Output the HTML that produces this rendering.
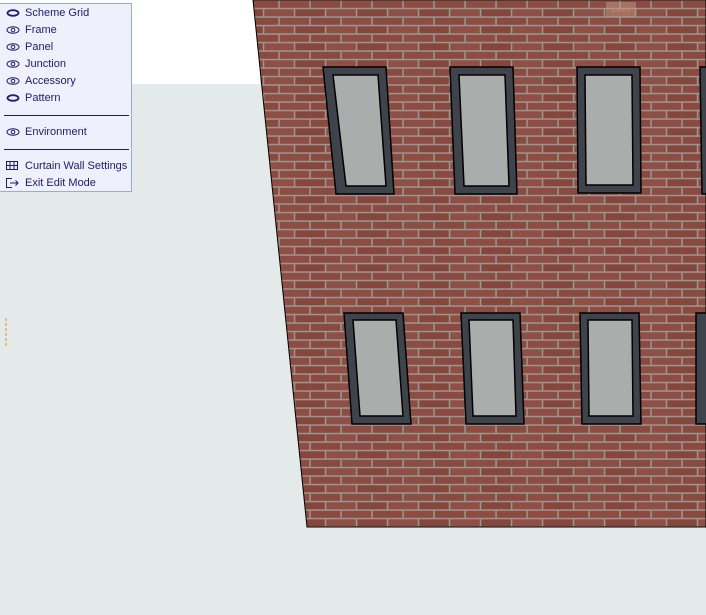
<html><head><style>
body{margin:0;width:706px;height:615px;overflow:hidden;background:#e4e9ea;position:relative;font-family:"Liberation Sans",sans-serif}
#menu{position:absolute;left:0;top:3px;width:131px;height:187px;background:#eff0fc;border:1px solid #8fabf2;border-left:none}
.it{position:absolute;left:25px;font-size:11px;color:#1c1c70;line-height:13px}
.ic{position:absolute;left:6px}
.sep{position:absolute;left:4px;width:125px;height:1px;background:#1c1c70}
</style></head><body>
<div style="position:absolute;left:0;top:0;width:260px;height:84px;background:#fff"></div>
<svg width="706" height="615" style="position:absolute;left:0;top:0">
<defs>
<pattern id="b" width="62" height="17" patternUnits="userSpaceOnUse">
<rect width="62" height="17" fill="#9b9693"/>
<rect x="0.8" y="0.8" width="29.5" height="7" fill="#8a4a40"/>
<rect x="31.8" y="0.8" width="29.5" height="7" fill="#8e4d42"/>
<rect x="-14.7" y="9.3" width="29.5" height="7" fill="#86463c"/>
<rect x="16.3" y="9.3" width="29.5" height="7" fill="#904f44"/>
<rect x="47.3" y="9.3" width="29.5" height="7" fill="#86463c"/>
</pattern>
</defs>
<polygon points="253,0 706,0 706,527 307,527" fill="url(#b)" stroke="#000" stroke-width="1"/>
<g stroke="#000" stroke-width="1.5">
<polygon points="323,67 386,67 394,194 336,194" fill="#3f434b"/>
<polygon points="333,75 378,75 386,186 346,186" fill="#abadad"/>
<polygon points="450,67 513,67 517,194 455,194" fill="#3f434b"/>
<polygon points="459,75 505,75 509,186 464,186" fill="#abadad"/>
<polygon points="577,67 640,67 641,193 578,193" fill="#3f434b"/>
<polygon points="585,75 632,75 633,185 586,185" fill="#abadad"/>
<polygon points="700,67 712,67 712,194 702,194" fill="#3f434b"/>
<polygon points="344,313 403,313 411,424 352,424" fill="#3f434b"/>
<polygon points="353,320 396,320 403,416 360,416" fill="#abadad"/>
<polygon points="461,313 520,313 524,424 466,424" fill="#3f434b"/>
<polygon points="469,320 513,320 516,416 473,416" fill="#abadad"/>
<polygon points="580,313 639,313 641,424 582,424" fill="#3f434b"/>
<polygon points="588,320 632,320 633,416 589,416" fill="#abadad"/>
<polygon points="696,313 712,313 712,424 696,424" fill="#3f434b"/>
</g>
<rect x="606" y="2" width="30" height="15" fill="#c49a86" opacity=".5"/>
<line x1="612" y1="11" x2="632" y2="11" stroke="#f08a20" stroke-dasharray="3,2"/>
<line x1="6" y1="318" x2="6" y2="346" stroke="#f08a20" stroke-dasharray="3,2"/>
</svg>
<div id="menu">
<svg class="ic" style="top:5px" width="14" height="8"><ellipse cx="7" cy="4" rx="5.5" ry="2.8" fill="none" stroke="#1c1c70" stroke-width="1.8"/></svg><div class="it" style="top:3px">Scheme Grid</div>
<svg class="ic" style="top:22px" width="14" height="8"><ellipse cx="7" cy="4" rx="6" ry="3.3" fill="none" stroke="#1c1c70"/><circle cx="7" cy="4" r="1.8" fill="none" stroke="#1c1c70"/></svg><div class="it" style="top:20px">Frame</div>
<svg class="ic" style="top:39px" width="14" height="8"><ellipse cx="7" cy="4" rx="6" ry="3.3" fill="none" stroke="#1c1c70"/><circle cx="7" cy="4" r="1.8" fill="none" stroke="#1c1c70"/></svg><div class="it" style="top:37px">Panel</div>
<svg class="ic" style="top:56px" width="14" height="8"><ellipse cx="7" cy="4" rx="6" ry="3.3" fill="none" stroke="#1c1c70"/><circle cx="7" cy="4" r="1.8" fill="none" stroke="#1c1c70"/></svg><div class="it" style="top:54px">Junction</div>
<svg class="ic" style="top:73px" width="14" height="8"><ellipse cx="7" cy="4" rx="6" ry="3.3" fill="none" stroke="#1c1c70"/><circle cx="7" cy="4" r="1.8" fill="none" stroke="#1c1c70"/></svg><div class="it" style="top:71px">Accessory</div>
<svg class="ic" style="top:90px" width="14" height="8"><ellipse cx="7" cy="4" rx="5.5" ry="2.8" fill="none" stroke="#1c1c70" stroke-width="1.8"/></svg><div class="it" style="top:88px">Pattern</div>
<div class="sep" style="top:111px"></div>
<svg class="ic" style="top:124px" width="14" height="8"><ellipse cx="7" cy="4" rx="6" ry="3.3" fill="none" stroke="#1c1c70"/><circle cx="7" cy="4" r="1.8" fill="none" stroke="#1c1c70"/></svg><div class="it" style="top:122px">Environment</div>
<div class="sep" style="top:145px"></div>
<svg class="ic" style="top:157px" width="13" height="10"><rect x="0.5" y="0.5" width="11" height="8" fill="none" stroke="#1c1c70"/><line x1="4" y1="0" x2="4" y2="9" stroke="#1c1c70"/><line x1="8" y1="0" x2="8" y2="9" stroke="#1c1c70"/><line x1="0" y1="4.5" x2="12" y2="4.5" stroke="#1c1c70"/></svg><div class="it" style="top:156px">Curtain Wall Settings</div>
<svg class="ic" style="top:174px" width="14" height="10"><path d="M6 0.5H0.5V9.5H6M4 5H12M9.5 2.5L12 5L9.5 7.5" fill="none" stroke="#1c1c70"/></svg><div class="it" style="top:173px">Exit Edit Mode</div>
</div>
</body></html>
